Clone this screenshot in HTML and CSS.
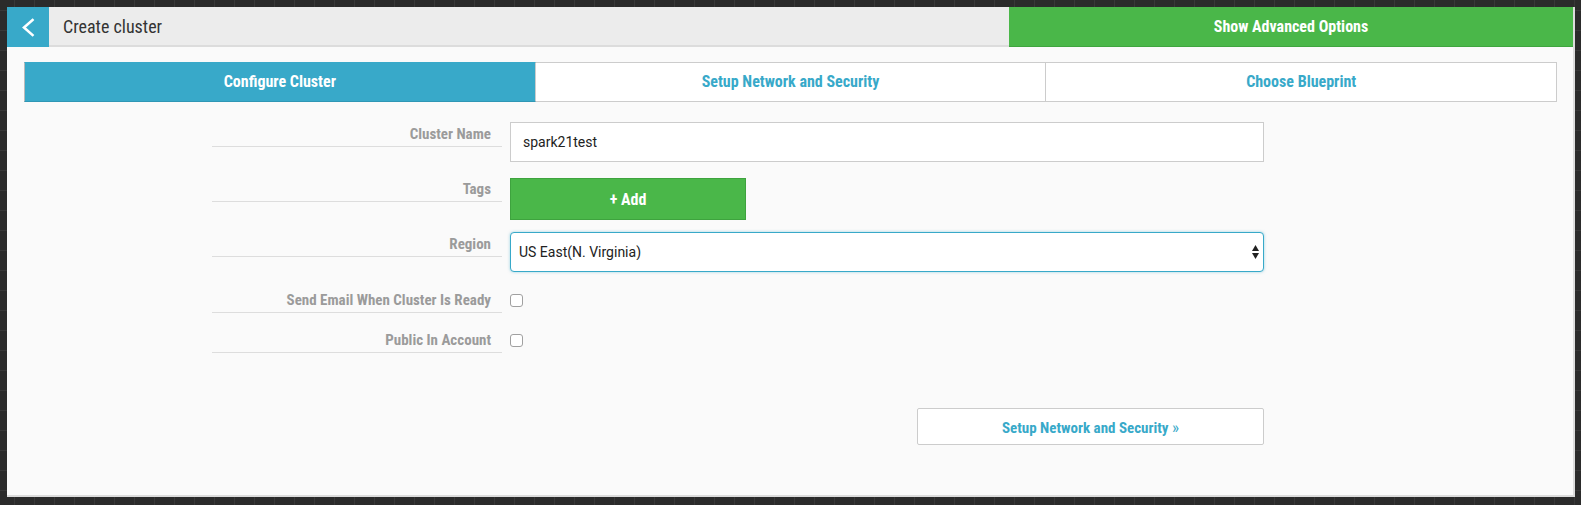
FILE: index.html
```html
<!DOCTYPE html>
<html>
<head>
    <title>Create cluster</title>
    <meta charset="UTF-8">
    <meta name="viewport" content="width=device-width, initial-scale=1.0">
    <link rel="stylesheet" href="styles.css">
</head>
<body>
    <div class="window">
        <div class="header">
            <a class="back-button" href="#">
                <svg width="42" height="40" viewBox="0 0 42 40">
                    <path d="M25.5 13 L17 20.5 L25.5 28" fill="none" stroke="#fff" stroke-width="2.6" stroke-linecap="square"/>
                </svg>
            </a>
            <div class="title">Create cluster</div>
            <button type="button" class="advanced-button">Show Advanced Options</button>
        </div>

        <div class="tabs">
            <div class="tab active">Configure Cluster</div>
            <div class="tab">Setup Network and Security</div>
            <div class="tab">Choose Blueprint</div>
        </div>

        <div class="form">
            <div class="form-row">
                <label class="field-label" for="clusterName">Cluster Name</label>
                <input type="text" id="clusterName" class="text-input" value="spark21test">
            </div>

            <div class="form-row">
                <label class="field-label">Tags</label>
                <button type="button" class="add-button">+ Add</button>
            </div>

            <div class="form-row">
                <label class="field-label" for="region">Region</label>
                <div class="select-wrap">
                    <select id="region" class="select-input">
                        <option>US East(N. Virginia)</option>
                        <option>US West(Oregon)</option>
                    </select>
                    <svg class="select-arrows" width="7" height="14" viewBox="0 0 7 14">
                        <path d="M0 6 L7 6 L3.5 0 Z" fill="#222"/>
                        <path d="M0 8 L7 8 L3.5 14 Z" fill="#222"/>
                    </svg>
                </div>
            </div>

            <div class="form-row check-row">
                <label class="field-label" for="sendEmail">Send Email When Cluster Is Ready</label>
                <input type="checkbox" id="sendEmail" class="checkbox">
            </div>

            <div class="form-row check-row">
                <label class="field-label" for="publicInAccount">Public In Account</label>
                <input type="checkbox" id="publicInAccount" class="checkbox">
            </div>

            <div class="form-footer">
                <button type="button" class="next-button">Setup Network and Security <span class="chevrons">&raquo;</span></button>
            </div>
        </div>
    </div>
</body>
</html>
```

FILE: styles.css
```css
html, body {
    height: 100%;
}

body {
    margin: 0;
    font-family: "Roboto Condensed", Roboto, "Liberation Sans", sans-serif;
    background-color: #2b2b2b;
    background-image:
        linear-gradient(to right, #383838 1px, transparent 1px),
        linear-gradient(to bottom, #383838 1px, transparent 1px);
    background-size: 20px 20px;
    background-position: 14px 10px;
    overflow: hidden;
}

.window {
    margin: 7px 0 0 7px;
    width: 1566px;
    height: 488px;
    background-color: #fafafa;
    border-right: 2px solid #dcdcdc;
    border-bottom: 2px solid #dcdcdc;
}

.header {
    display: flex;
    height: 40px;
}

.back-button {
    display: block;
    width: 42px;
    height: 40px;
    background-color: #38a9c9;
}

.back-button svg {
    display: block;
}

.title {
    flex: 1;
    background-color: #ececec;
    border-bottom: 2px solid #dcdcdc;
    color: #333;
    font-size: 18px;
    line-height: 40px;
    padding-left: 14px;
}

.advanced-button {
    width: 564px;
    height: 40px;
    background-color: #4ab749;
    border: none;
    border-bottom: 1px solid #3fa53f;
    color: white;
    font-family: inherit;
    font-size: 16px;
    font-weight: bold;
    padding: 0;
    cursor: pointer;
}

.tabs {
    display: flex;
    margin: 15px 16px 0 17px;
}

.tab {
    flex: 1;
    height: 38px;
    line-height: 38px;
    text-align: center;
    background-color: white;
    border: 1px solid #cccccc;
    border-left: none;
    color: #38a9c9;
    font-size: 16px;
    font-weight: bold;
}

.tab:first-child {
    border-left: 1px solid #bbbbbb;
}

.tab.active {
    background-color: #38a9c9;
    border-top-color: #38a9c9;
    border-bottom-color: #2f97b5;
    color: white;
}

.form {
    width: 1052px;
    margin: 20px 0 0 205px;
}

.form-row {
    display: flex;
    align-items: flex-start;
    gap: 8px;
    height: 40px;
    margin-bottom: 15px;
}

.form-row.check-row {
    height: 25px;
}

.field-label {
    width: 279px;
    padding: 4px 11px 3px 0;
    border-bottom: 1px solid #dddddd;
    text-align: right;
    color: #9b9b9b;
    font-size: 15px;
    font-weight: bold;
    line-height: 17px;
}

.check-row .field-label {
    padding-top: 5px;
}

.text-input,
.select-input {
    width: 754px;
    height: 40px;
    box-sizing: border-box;
    margin: 0;
    background-color: white;
    color: #222;
    font-family: Roboto, "Liberation Sans", sans-serif;
    font-size: 14px;
    outline: none;
}

.text-input {
    border: 1px solid #cccccc;
    padding: 0 12px;
}

.select-wrap {
    position: relative;
}

.select-input {
    -webkit-appearance: none;
    appearance: none;
    border: 1px solid #38a9c9;
    border-radius: 4px;
    box-shadow: 0 0 3px rgba(56, 169, 201, 0.5);
    padding: 0 24px 0 8px;
}

.select-arrows {
    position: absolute;
    right: 5px;
    top: 13px;
    pointer-events: none;
}

.add-button {
    width: 236px;
    height: 42px;
    margin-top: 1px;
    background-color: #4ab749;
    border: 1px solid #3ea33e;
    color: white;
    font-family: inherit;
    font-size: 16px;
    font-weight: bold;
    cursor: pointer;
}

.checkbox {
    -webkit-appearance: none;
    appearance: none;
    width: 13px;
    height: 13px;
    margin: 7px 0 0 0;
    background-color: white;
    border: 1px solid #a0a0a0;
    border-radius: 3px;
}

.form-footer {
    display: flex;
    justify-content: flex-end;
    margin-top: 56px;
}

.next-button {
    width: 347px;
    height: 37px;
    background-color: white;
    border: 1px solid #cccccc;
    border-radius: 2px;
    color: #38a9c9;
    font-family: inherit;
    font-size: 15px;
    font-weight: bold;
    cursor: pointer;
}

.chevrons {
    font-weight: normal;
    font-size: 17px;
}
```
